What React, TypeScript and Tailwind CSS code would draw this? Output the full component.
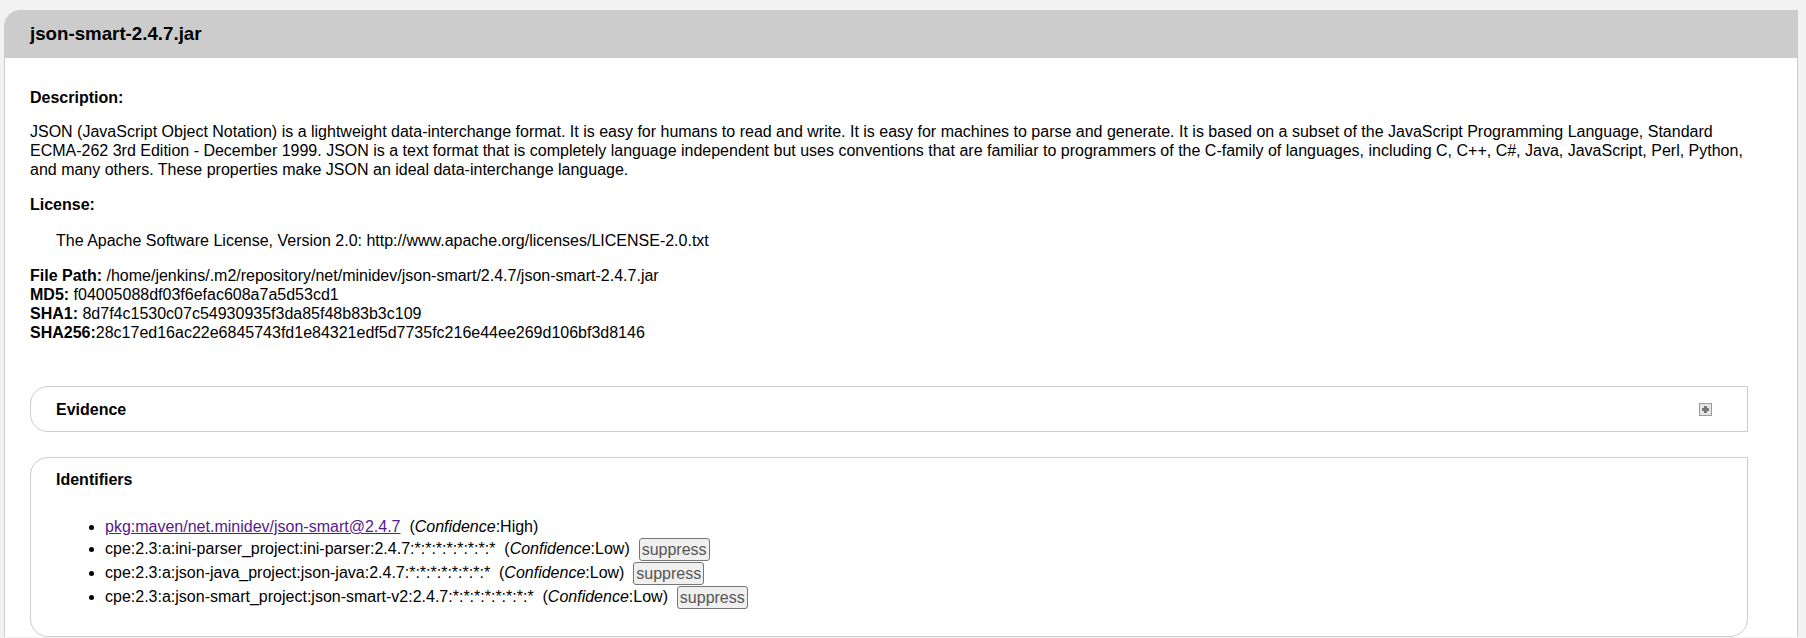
import React from 'react'

const identifiers = [
  { name: 'cpe:2.3:a:ini-parser_project:ini-parser:2.4.7:*:*:*:*:*:*:*:*', confidence: 'Low' },
  { name: 'cpe:2.3:a:json-java_project:json-java:2.4.7:*:*:*:*:*:*:*:*', confidence: 'Low' },
  { name: 'cpe:2.3:a:json-smart_project:json-smart-v2:2.4.7:*:*:*:*:*:*:*:*', confidence: 'Low' },
]

function PlusIcon() {
  return (
    <svg width="13" height="13" viewBox="0 0 13 13" shapeRendering="crispEdges">
      <rect x="0.5" y="0.5" width="12" height="12" fill="#e4e4e4" stroke="#9a9a9a" />
      <rect x="5" y="3" width="3" height="7" fill="#777" />
      <rect x="3" y="5" width="7" height="3" fill="#777" />
    </svg>
  )
}

function Confidence({ level }: { level: string }) {
  return (
    <span>
      (<i>Confidence</i>:{level})
    </span>
  )
}

export default function App() {
  return (
    <div className="min-h-[638px] overflow-hidden bg-[#f2f2f2] pl-[4px] pr-[8px] pt-[10px] font-['Liberation_Sans',Arial,sans-serif] text-[16px] leading-[19px] text-black">
      <div className="overflow-hidden rounded-tl-[16px] border-x border-[#cccccc] bg-white">
        <div className="flex h-[48px] items-center bg-[#cccccc] pl-[25px]">
          <h3 className="text-[18.72px] font-bold leading-[22px]">json-smart-2.4.7.jar</h3>
        </div>

        <div className="pl-[25px] pr-[49px] pt-[30px]">
          <p className="font-bold">Description:</p>
          <p className="mt-[15px]">
            JSON (JavaScript Object Notation) is a lightweight data-interchange format. It is easy for humans to read and
            write. It is easy for machines to parse and generate. It is based on a subset of the JavaScript Programming
            Language, Standard ECMA-262 3rd Edition - December 1999. JSON is a text format that is completely language
            independent but uses conventions that are familiar to programmers of the C-family of languages, including C,
            C++, C#, Java, JavaScript, Perl, Python, and many others. These properties make JSON an ideal data-interchange
            language.
          </p>
          <p className="mt-[16px] font-bold">License:</p>
          <p className="mt-[17px] pl-[26px]">
            The Apache Software License, Version 2.0: http://www.apache.org/licenses/LICENSE-2.0.txt
          </p>
          <div className="mt-[16px]">
            <div>
              <b>File Path:</b> /home/jenkins/.m2/repository/net/minidev/json-smart/2.4.7/json-smart-2.4.7.jar
            </div>
            <div>
              <b>MD5:</b> f04005088df03f6efac608a7a5d53cd1
            </div>
            <div>
              <b>SHA1:</b> 8d7f4c1530c07c54930935f3da85f48b83b3c109
            </div>
            <div>
              <b>SHA256:</b>28c17ed16ac22e6845743fd1e84321edf5d7735fc216e44ee269d106bf3d8146
            </div>
          </div>

          <div className="mt-[44px] flex h-[46px] items-center justify-between rounded-l-[18px] border border-[#cccccc] pl-[25px] pr-[35px]">
            <span className="font-bold">Evidence</span>
            <PlusIcon />
          </div>

          <div className="mt-[25px] rounded-tl-[18px] rounded-b-[18px] border border-[#cccccc] pb-[27px] pl-[25px] pt-[12px]">
            <p className="font-bold">Identifiers</p>
            <ul className="mt-[28px] list-disc pl-[49px]">
              <li className="h-[20px]">
                <a href="#" className="text-[#551a8b] underline">
                  pkg:maven/net.minidev/json-smart@2.4.7
                </a>
                {'\u00a0 '}
                <Confidence level="High" />
              </li>
              {identifiers.map((id) => (
                <li key={id.name} className="h-[24px] leading-[24px]">
                  {id.name}
                  {'\u00a0 '}
                  <Confidence level={id.confidence} />
                  {'\u00a0 '}
                  <button className="inline-block rounded-[3px] border border-[#767676] bg-[#efefef] px-[2px] py-[1px] align-middle leading-[19px] text-[#555]">
                    suppress
                  </button>
                </li>
              ))}
            </ul>
          </div>
        </div>
      </div>
    </div>
  )
}
